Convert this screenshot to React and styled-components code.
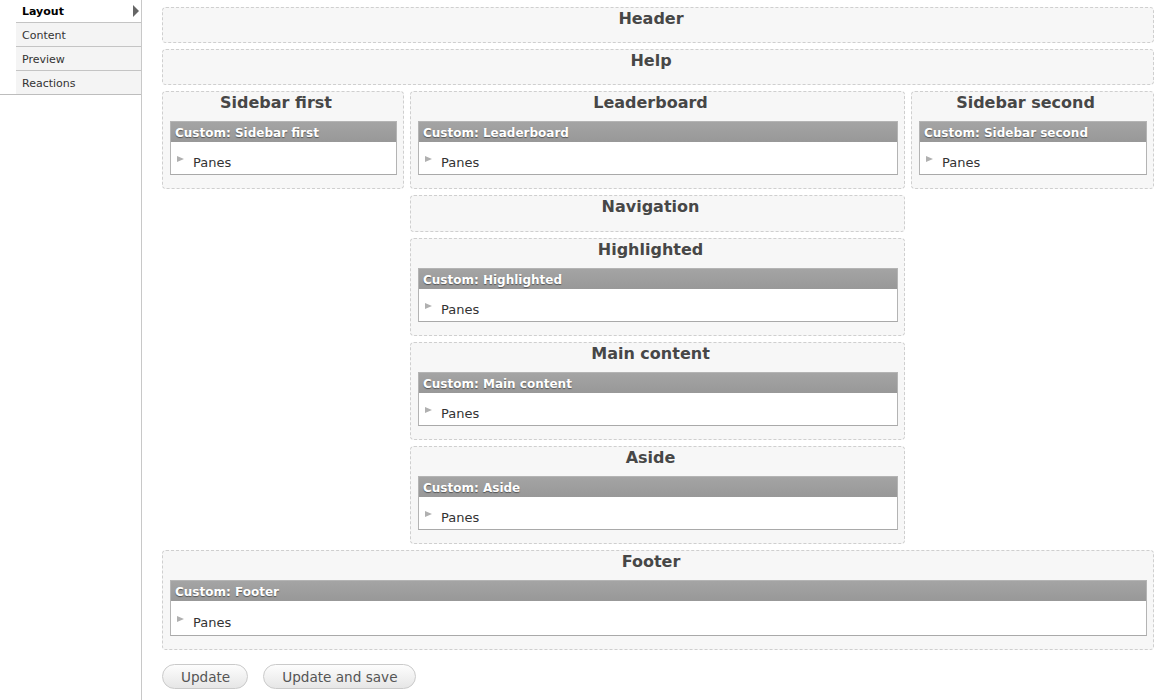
import styled, { createGlobalStyle } from 'styled-components'

const GlobalStyle = createGlobalStyle`
  html, body {
    margin: 0;
    padding: 0;
    background: #fff;
    font-family: "DejaVu Sans", Verdana, sans-serif;
    color: #333;
  }
`

const Page = styled.div`
  display: flex;
  min-height: 100vh;
`

const Side = styled.nav`
  width: 141px;
  flex: none;
  border-right: 1px solid #c8c8c8;
`

const Tabs = styled.ul`
  list-style: none;
  margin: -1px 0 0;
  padding: 0;
  border-bottom: 1px solid #bdbdbd;
`

const Tab = styled.li`
  position: relative;
  margin-left: 16px;
  height: 23px;
  line-height: 25px;
  padding-left: 6px;
  font-size: 11px;
  background: ${p => (p.$active ? '#fff' : '#f4f4f4')};
  color: ${p => (p.$active ? '#000' : '#333')};
  font-weight: ${p => (p.$active ? 'bold' : 'normal')};
  border-bottom: 1px solid #c4c4c4;

  &:last-child {
    border-bottom: none;
  }
`

const TabArrow = styled.span`
  position: absolute;
  right: 2px;
  top: 6px;
  width: 0;
  height: 0;
  border-top: 6px solid transparent;
  border-bottom: 6px solid transparent;
  border-left: 6px solid #666;
`

const Main = styled.main`
  flex: 1;
  padding: 7px 8px 0 20px;
  display: flex;
  flex-direction: column;
  gap: 6px;
`

const Columns = styled.div`
  display: grid;
  grid-template-columns: 242px 495px 1fr;
  column-gap: 6px;
  align-items: start;
`

const Stack = styled.div`
  display: flex;
  flex-direction: column;
  gap: 6px;
`

const Region = styled.section`
  background: #f7f7f7;
  border: 1px dashed #cfcfcf;
  border-radius: 4px;
  padding: 1px 6px ${p => (p.$pad ? p.$pad : 13)}px 7px;
`

const RegionTitle = styled.h2`
  margin: 0 0 ${p => (p.$empty ? 0 : 8)}px;
  padding-right: 15px;
  font-size: 16px;
  line-height: 20px;
  font-weight: bold;
  color: #474747;
  text-align: center;
`

const Pane = styled.div`
  background: #fff;
  border: 1px solid #b4b4b4;
  border-bottom-color: #a9a9a9;
`

const PaneBar = styled.div`
  height: 20px;
  line-height: 22px;
  padding-left: 4px;
  background: linear-gradient(#a4a4a4, #989898);
  color: #fff;
  font-size: 12px;
  font-weight: bold;
  text-shadow: 0 1px 1px #555;
  white-space: nowrap;
  overflow: hidden;
`

const PaneBody = styled.div`
  display: flex;
  align-items: center;
  height: ${p => (p.$tall ? 34 : 32)}px;
  padding: 0 6px;
  padding-top: 8px;
  box-sizing: border-box;
  font-size: 13px;
  color: #333;
`

const Arrow = styled.span`
  width: 0;
  height: 0;
  margin: -6px 9px 0 0;
  border-top: 3.5px solid transparent;
  border-bottom: 3.5px solid transparent;
  border-left: 7px solid #b0b0b0;
`

const Actions = styled.div`
  display: flex;
  gap: 15px;
  margin-top: 8px;
`

const Button = styled.button`
  height: 25px;
  padding: 0 17px 0 18px;
  border: 1px solid #cacaca;
  border-radius: 13px;
  background: linear-gradient(#fdfdfd, #e6e6e6);
  font-family: "DejaVu Sans", Verdana, sans-serif;
  font-size: 13.6px;
  color: #555;
  cursor: pointer;
`

function Block({ title, wide }) {
  return (
    <Region>
      <RegionTitle>{title}</RegionTitle>
      <Pane>
        <PaneBar>Custom: {title}</PaneBar>
        <PaneBody $tall={wide}>
          <Arrow />
          Panes
        </PaneBody>
      </Pane>
    </Region>
  )
}

function Empty({ title, pad }) {
  return (
    <Region $pad={pad}>
      <RegionTitle $empty>{title}</RegionTitle>
    </Region>
  )
}

const tabs = ['Layout', 'Content', 'Preview', 'Reactions']

export default function App() {
  return (
    <Page>
      <GlobalStyle />
      <Side>
        <Tabs>
          {tabs.map((t, i) => (
            <Tab key={t} $active={i === 0}>
              {t}
              {i === 0 && <TabArrow />}
            </Tab>
          ))}
        </Tabs>
      </Side>
      <Main>
        <Empty title="Header" />
        <Empty title="Help" />
        <Columns>
          <Block title="Sidebar first" />
          <Stack>
            <Block title="Leaderboard" />
            <Empty title="Navigation" pad={14} />
            <Block title="Highlighted" />
            <Block title="Main content" />
            <Block title="Aside" />
          </Stack>
          <Block title="Sidebar second" />
        </Columns>
        <Block title="Footer" wide />
        <Actions>
          <Button>Update</Button>
          <Button>Update and save</Button>
        </Actions>
      </Main>
    </Page>
  )
}
